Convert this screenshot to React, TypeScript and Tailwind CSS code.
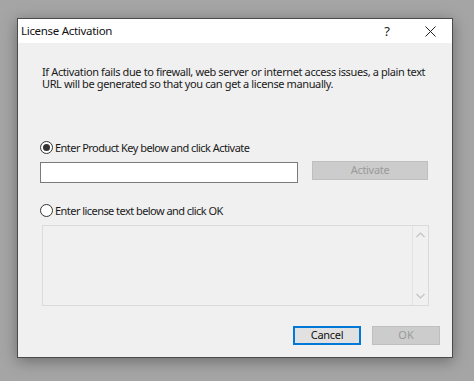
import React from "react";

function Radio({ checked, label }: { checked?: boolean; label: string }) {
  return (
    <div className="flex items-center h-[13px]">
      <span className="w-[13px] h-[13px] rounded-full border border-[#333333] bg-white flex items-center justify-center">
        {checked && <span className="w-[7px] h-[7px] rounded-full bg-[#333333]" />}
      </span>
      <span className="ml-[2px] text-[11px] leading-[13px] text-[#1a1a1a] tracking-[-0.55px] whitespace-nowrap">
        {label}
      </span>
    </div>
  );
}

export default function App() {
  return (
    <div
      className="w-[474px] h-[381px] bg-[#a5a5a5] pt-[18px] pl-[17px] overflow-hidden"
      style={{ fontFamily: '"Noto Sans", "Open Sans", sans-serif' }}
    >
      <div className="w-[436px] h-[340px] border border-[#4a4a4a] bg-[#f0f0f0] flex flex-col shadow-[0_3px_14px_rgba(0,0,0,0.35)]">
        {/* title bar */}
        <div className="h-[24px] bg-white flex items-center pl-[3px] shrink-0">
          <span className="text-[11.5px] text-[#111111] leading-none tracking-[-0.3px]">License Activation</span>
          <span className="ml-auto text-[13px] text-[#222222] leading-none mr-[35px]">?</span>
          <svg width="11" height="11" viewBox="0 0 11 11" className="mr-[16px]">
            <path d="M0.5 0.5 L10.5 10.5 M10.5 0.5 L0.5 10.5" stroke="#222222" strokeWidth="1" />
          </svg>
        </div>

        {/* body */}
        <div className="flex-1 flex flex-col pl-[22px] pr-[12px]">
          <div className="mt-[23px] ml-[2px] flex flex-col text-[11px] text-[#1a1a1a] tracking-[-0.38px] whitespace-nowrap">
            <span className="leading-[12px] h-[12px]">
              If Activation fails due to firewall, web server or internet access issues, a plain text
            </span>
            <span className="leading-[12px] h-[12px]">
              URL will be generated so that you can get a license manually.
            </span>
          </div>

          <div className="mt-[51px]">
            <Radio checked label="Enter Product Key below and click Activate" />
          </div>

          <div className="mt-[8px] flex items-start">
            <div className="w-[258px] h-[21px] bg-white border border-[#7a7a7a]" />
            <div className="ml-[14px] -mt-[1px] w-[116px] h-[19px] bg-[#cccccc] border border-[#bfbfbf] flex items-center justify-center text-[11px] text-[#9a9a9a] tracking-[-0.3px]">
              Activate
            </div>
          </div>

          <div className="mt-[21px]">
            <Radio label="Enter license text below and click OK" />
          </div>

          <div className="mt-[8px] ml-[2px] w-[387px] h-[81px] border border-[#dadada] bg-[#f0f0f0] flex justify-end">
            <div className="w-[16px] border-l border-[#e3e3e3] flex flex-col items-center justify-between py-[6px]">
              <svg width="9" height="6" viewBox="0 0 9 6">
                <path d="M0.5 5 L4.5 1 L8.5 5" fill="none" stroke="#c2c2c2" strokeWidth="1.2" />
              </svg>
              <svg width="9" height="6" viewBox="0 0 9 6">
                <path d="M0.5 1 L4.5 5 L8.5 1" fill="none" stroke="#c2c2c2" strokeWidth="1.2" />
              </svg>
            </div>
          </div>

          <div className="mt-[20px] flex justify-end gap-[11px]">
            <div className="w-[68px] h-[19px] bg-[#e1e1e1] border-2 border-[#0078d7] flex items-center justify-center text-[11px] text-[#111111] tracking-[-0.3px]">
              Cancel
            </div>
            <div className="w-[68px] h-[19px] bg-[#cccccc] border border-[#bfbfbf] flex items-center justify-center text-[11px] text-[#9a9a9a]">
              OK
            </div>
          </div>
        </div>
      </div>
    </div>
  );
}
